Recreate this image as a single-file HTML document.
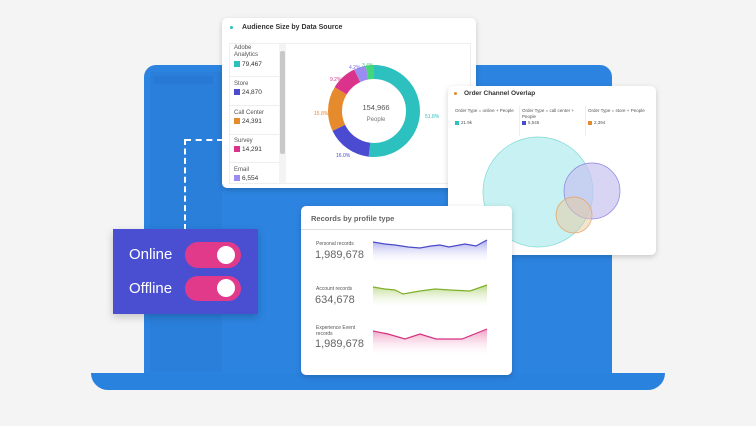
<!DOCTYPE html>
<html><head><meta charset="utf-8"><style>
*{margin:0;padding:0;box-sizing:border-box}
body{width:756px;height:426px;background:#f4f4f4;position:relative;overflow:hidden;font-family:"Liberation Sans",sans-serif}
.a{position:absolute}
.card{position:absolute;background:#fff;border-radius:5px;box-shadow:0 2px 6px rgba(0,0,0,.18)}
.t{position:absolute;font-size:6px;color:#555;white-space:nowrap}
.sq{display:inline-block;width:6px;height:6px;vertical-align:-1px;margin-right:2px}
</style></head><body>
<div class="a" style="left:144px;top:65px;width:468px;height:312px;background:#2c84e0;border-radius:12px 12px 0 0"></div>
<div class="a" style="left:91px;top:373px;width:574px;height:17px;background:#2a82df;border-radius:0 0 22px 22px"></div>
<div class="a" style="left:150px;top:72px;width:72px;height:300px;background:#2a7fdb"></div>
<div class="a" style="left:153px;top:76px;width:60px;height:8px;background:#2878d6;border-radius:2px"></div>
<div class="a" style="left:185px;top:139px;width:38px;border-top:2px dashed #fff"></div>
<div class="a" style="left:184px;top:139px;height:91px;border-left:2px dashed #fff"></div>

<div class="card" style="left:222px;top:18px;width:254px;height:170px">
 <div class="a" style="left:8px;top:8px;width:3px;height:3px;background:#2cc0be;border-radius:50%"></div>
 <div class="t" style="left:20px;top:6px;font-size:7px;font-weight:bold;color:#333">Audience Size by Data Source</div>
 <div class="a" style="left:7px;top:25px;width:242px;height:141px;border:1px solid #eee"></div>
 <div class="t" style="left:12px;top:27px;line-height:7px">Adobe<br>Analytics</div>
 <div class="t" style="left:12px;top:43px;font-size:6.5px;color:#333"><span class="sq" style="background:#2cc0be"></span>79,467</div>
 <div class="a" style="left:8px;top:58px;width:50px;border-top:1px solid #eee"></div>
 <div class="t" style="left:12px;top:63px">Store</div>
 <div class="t" style="left:12px;top:71px;font-size:6.5px;color:#333"><span class="sq" style="background:#4b4bd1"></span>24,870</div>
 <div class="a" style="left:8px;top:87px;width:50px;border-top:1px solid #eee"></div>
 <div class="t" style="left:12px;top:92px">Call Center</div>
 <div class="t" style="left:12px;top:100px;font-size:6.5px;color:#333"><span class="sq" style="background:#e68a2e"></span>24,391</div>
 <div class="a" style="left:8px;top:116px;width:50px;border-top:1px solid #eee"></div>
 <div class="t" style="left:12px;top:120px">Survey</div>
 <div class="t" style="left:12px;top:128px;font-size:6.5px;color:#333"><span class="sq" style="background:#d9338b"></span>14,291</div>
 <div class="a" style="left:8px;top:144px;width:50px;border-top:1px solid #eee"></div>
 <div class="t" style="left:12px;top:149px">Email</div>
 <div class="t" style="left:12px;top:157px;font-size:6.5px;color:#333"><span class="sq" style="background:#9a8cf0"></span>6,554</div>
 <div class="a" style="left:57px;top:26px;width:7px;height:139px;background:#f4f4f4"></div>
 <div class="a" style="left:58px;top:33px;width:5px;height:103px;background:#c8c8c8;border-radius:2px"></div>
</div>
<svg class="a" style="left:0;top:0" width="756" height="426">
 <g transform="rotate(-90 374 111)" fill="none" stroke-width="14">
  <circle cx="374" cy="111" r="39" stroke="#2cc0be" stroke-dasharray="126.9 245.1"/>
  <circle cx="374" cy="111" r="39" stroke="#4b4bd1" stroke-dasharray="39.2 245.1" stroke-dashoffset="-126.9"/>
  <circle cx="374" cy="111" r="39" stroke="#e68a2e" stroke-dasharray="38.7 245.1" stroke-dashoffset="-166.1"/>
  <circle cx="374" cy="111" r="39" stroke="#d9338b" stroke-dasharray="22.5 245.1" stroke-dashoffset="-204.8"/>
  <circle cx="374" cy="111" r="39" stroke="#9a8cf0" stroke-dasharray="10.3 245.1" stroke-dashoffset="-227.3"/>
  <circle cx="374" cy="111" r="39" stroke="#45d67a" stroke-dasharray="8.4 245.1" stroke-dashoffset="-237.6"/>
 </g>
 <text x="376" y="110" font-size="7.5" fill="#555" text-anchor="middle" font-family="Liberation Sans">154,966</text>
 <text x="376" y="121" font-size="6" fill="#777" text-anchor="middle" font-family="Liberation Sans">People</text>
 <g font-size="5" font-family="Liberation Sans">
  <text x="425" y="118" fill="#2cc0be">51.8%</text>
  <text x="336" y="157" fill="#4b4bd1">16.0%</text>
  <text x="314" y="115" fill="#e68a2e">15.8%</text>
  <text x="330" y="81" fill="#d9338b">9.2%</text>
  <text x="349" y="69" fill="#7a6ff0">4.2%</text>
  <text x="362" y="67" fill="#35c46a">3.4%</text>
 </g>
</svg>

<div class="card" style="left:448px;top:86px;width:208px;height:169px">
 <div class="a" style="left:6px;top:6px;width:3px;height:3px;background:#e68a2e;border-radius:50%"></div>
 <div class="t" style="left:16px;top:4px;font-size:6.5px;font-weight:bold;color:#333">Order Channel Overlap</div>
 <div class="t" style="left:7px;top:22px;font-size:4.5px">Order Type = online + People</div>
 <div class="t" style="left:7px;top:34px;font-size:4.5px"><span class="sq" style="background:#2cc0be;width:4px;height:4px"></span>21.9k</div>
 <div class="a" style="left:71px;top:20px;height:30px;border-left:1px solid #eee"></div>
 <div class="t" style="left:74px;top:22px;font-size:4.5px;line-height:6px">Order Type = call center +<br>People</div>
 <div class="t" style="left:74px;top:34px;font-size:4.5px"><span class="sq" style="background:#4b4bd1;width:4px;height:4px"></span>5,545</div>
 <div class="a" style="left:137px;top:20px;height:30px;border-left:1px solid #eee"></div>
 <div class="t" style="left:140px;top:22px;font-size:4.5px">Order Type = store + People</div>
 <div class="t" style="left:140px;top:34px;font-size:4.5px"><span class="sq" style="background:#e68a2e;width:4px;height:4px"></span>2,394</div>
</div>
<svg class="a" style="left:0;top:0" width="756" height="426">
 <circle cx="538" cy="192" r="55" fill="#bdeff0" fill-opacity=".85" stroke="#7fd8d8" stroke-width=".7"/>
 <circle cx="592" cy="191" r="28" fill="#c6c2f0" fill-opacity=".7" stroke="#8a82e0" stroke-width=".7"/>
 <circle cx="574" cy="215" r="18" fill="#e8c99e" fill-opacity=".5" stroke="#e8a060" stroke-width=".7"/>
</svg>

<div class="card" style="left:301px;top:206px;width:211px;height:169px">
 <div class="t" style="left:10px;top:8px;font-size:7.5px;font-weight:bold;color:#666">Records by profile type</div>
 <div class="a" style="left:0;top:23px;width:211px;border-top:1px solid #ddd"></div>
 <div class="t" style="left:15px;top:35px;font-size:5px">Personal records</div>
 <div class="t" style="left:14px;top:43px;font-size:11px;color:#666">1,989,678</div>
 <div class="t" style="left:15px;top:80px;font-size:5px">Account records</div>
 <div class="t" style="left:14px;top:88px;font-size:11px;color:#666">634,678</div>
 <div class="t" style="left:15px;top:119px;font-size:5px;line-height:6px">Experience Event<br>records</div>
 <div class="t" style="left:14px;top:132px;font-size:11px;color:#666">1,989,678</div>
</div>
<svg class="a" style="left:0;top:0" width="756" height="426">
 <defs>
  <linearGradient id="g1" x1="0" y1="0" x2="0" y2="1"><stop offset="0" stop-color="#6b6be0" stop-opacity=".6"/><stop offset="1" stop-color="#fff" stop-opacity="0"/></linearGradient>
  <linearGradient id="g2" x1="0" y1="0" x2="0" y2="1"><stop offset="0" stop-color="#8fc03a" stop-opacity=".6"/><stop offset="1" stop-color="#fff" stop-opacity="0"/></linearGradient>
  <linearGradient id="g3" x1="0" y1="0" x2="0" y2="1"><stop offset="0" stop-color="#e04a90" stop-opacity=".55"/><stop offset="1" stop-color="#fff" stop-opacity="0"/></linearGradient>
 </defs>
 <path d="M373 242L385 244L395 245L408 247L420 248L431 246L440 245L449 247L465 244L476 246L487 240V264H373Z" fill="url(#g1)"/>
 <path d="M373 242L385 244L395 245L408 247L420 248L431 246L440 245L449 247L465 244L476 246L487 240" fill="none" stroke="#4a4ac8" stroke-width="1.2"/>
 <path d="M373 287L385 289L395 290L403 294L420 291L435 289L450 290L470 291L487 285V309H373Z" fill="url(#g2)"/>
 <path d="M373 287L385 289L395 290L403 294L420 291L435 289L450 290L470 291L487 285" fill="none" stroke="#7fb02a" stroke-width="1.2"/>
 <path d="M373 331L388 334L405 339L420 334L436 339L462 339L487 329V357H373Z" fill="url(#g3)"/>
 <path d="M373 331L388 334L405 339L420 334L436 339L462 339L487 329" fill="none" stroke="#d6307f" stroke-width="1.2"/>
</svg>

<div class="a" style="left:113px;top:229px;width:145px;height:85px;background:#4a4fd2;box-shadow:0 3px 8px rgba(0,0,0,.2)"></div>
<div class="t" style="left:129px;top:246px;font-size:15px;color:#fff">Online</div>
<div class="t" style="left:129px;top:280px;font-size:15px;color:#fff">Offline</div>
<div class="a" style="left:185px;top:242px;width:56px;height:26px;border-radius:13px;background:#e13a8a"></div>
<div class="a" style="left:217px;top:246px;width:18px;height:18px;border-radius:50%;background:#fff"></div>
<div class="a" style="left:185px;top:276px;width:56px;height:25px;border-radius:13px;background:#e13a8a"></div>
<div class="a" style="left:217px;top:279px;width:18px;height:18px;border-radius:50%;background:#fff"></div>
</body></html>
